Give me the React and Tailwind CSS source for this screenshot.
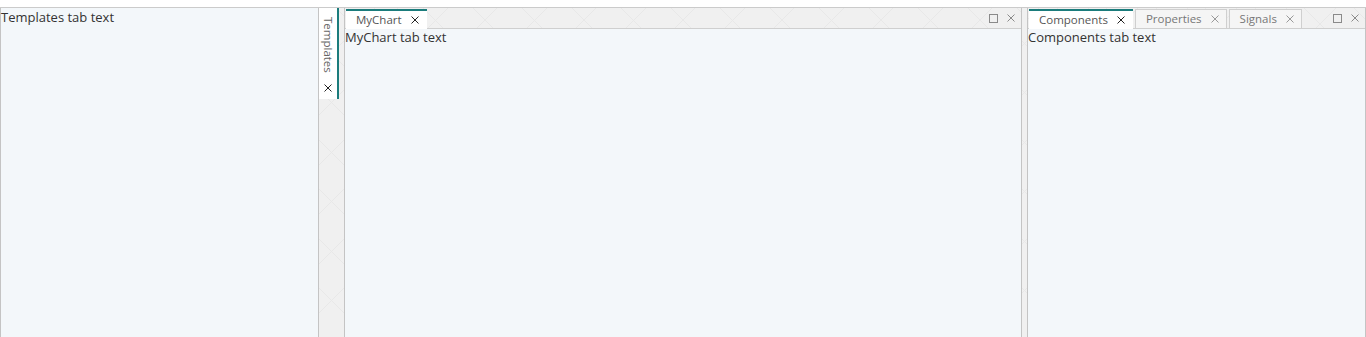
import React from "react";

const hatch =
  "bg-[#f0f0f0] bg-[repeating-linear-gradient(45deg,transparent_0px,transparent_34px,#e8e8e8_34px,#e8e8e8_35px),repeating-linear-gradient(-45deg,transparent_0px,transparent_34px,#e8e8e8_34px,#e8e8e8_35px)]";

const CloseIcon = ({ className = "" }) => (
  <svg width="8" height="8" viewBox="0 0 8 8" className={className}>
    <path d="M0.5 0.5L7.5 7.5M7.5 0.5L0.5 7.5" stroke="currentColor" strokeWidth="1" fill="none" />
  </svg>
);

const MaxIcon = () => (
  <svg width="9" height="9" viewBox="0 0 9 9">
    <rect x="0.5" y="0.5" width="8" height="8" stroke="currentColor" strokeWidth="1" fill="none" />
  </svg>
);

const Tab = ({ label, active }) => (
  <div
    className={
      active
        ? "flex items-center h-[20px] bg-white border-t-2 border-[#1b7c7c] pl-[10px] pr-[8px] gap-[9px] text-[#555] -mb-px relative z-10"
        : "flex items-center h-[19px] mt-[1px] bg-[#f5f5f5] border border-[#cfcfcf] border-b-0 pl-[10px] pr-[7px] gap-[9px] text-[#777]"
    }
  >
    <span className="text-[11.5px] leading-none">{label}</span>
    <CloseIcon className={active ? "text-[#222]" : "text-[#999]"} />
  </div>
);

const Header = ({ tabs }) => (
  <div className={`flex items-end h-[20px] pl-[1px] ${hatch}`}>
    <div className="flex items-end gap-[2px]">
      {tabs.map((t) => (
        <Tab key={t.label} {...t} />
      ))}
    </div>
    <div className="ml-auto flex items-center gap-[9px] pr-[6px] self-center text-[#8a8a8a]">
      <MaxIcon />
      <CloseIcon />
    </div>
  </div>
);

export default function App() {
  return (
    <div
      className="h-[337px] bg-white pt-[7px] overflow-hidden"
      style={{ fontFamily: '"Open Sans", "Noto Sans", sans-serif' }}
    >
      <div className="flex h-[330px] border-t border-[#cbcbcb]">
        <div className="w-[319px] border-x border-[#c4c4c4] bg-[#f3f7fa] text-[13px] leading-[16px] text-[#333] pt-[1px]">
          Templates tab text
        </div>
        <div className={`w-[25px] flex flex-col ${hatch}`}>
          <div className="w-[20px] h-[91px] bg-white border-r-2 border-[#1b7c7c] flex flex-col items-center pt-[9px] pb-[7px]">
            <span className="text-[11.5px] leading-none text-[#666] [writing-mode:vertical-rl]">
              Templates
            </span>
            <CloseIcon className="text-[#222] mt-auto" />
          </div>
        </div>
        <div className="w-[678px] flex flex-col border-x border-[#c4c4c4]">
          <Header tabs={[{ label: "MyChart", active: true }]} />
          <div className="flex-1 bg-[#f3f7fa] border-t border-[#cfcfcf] text-[13px] leading-[16px] text-[#333]">
            MyChart tab text
          </div>
        </div>
        <div className={`w-[5px] ${hatch}`}></div>
        <div className="flex-1 flex flex-col border-x border-[#c4c4c4]">
          <Header
            tabs={[
              { label: "Components", active: true },
              { label: "Properties" },
              { label: "Signals" },
            ]}
          />
          <div className="flex-1 bg-[#f3f7fa] border-t border-[#cfcfcf] text-[13px] leading-[16px] text-[#333]">
            Components tab text
          </div>
        </div>
      </div>
    </div>
  );
}
